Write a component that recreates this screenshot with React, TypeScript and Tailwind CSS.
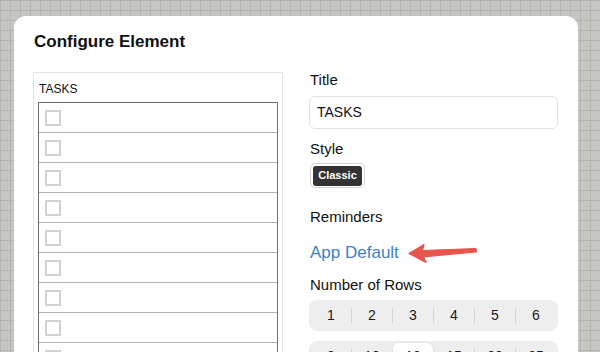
import React from "react";

const rows = Array.from({ length: 9 });

function Segmented({ items, selected }: { items: string[]; selected?: number }) {
  return (
    <div className="flex h-[31px] items-center rounded-[8px] bg-[#eeeeee] px-[2px]">
      {items.map((it, i) => {
        const showSep = i > 0 && selected !== i && selected !== i - 1;
        return (
          <React.Fragment key={i}>
            {i > 0 && (
              <div className={showSep ? "h-[15px] w-px bg-[#d3d3d3]" : "h-[15px] w-px bg-transparent"} />
            )}
            <div
              className={
                selected === i
                  ? "flex h-[27px] flex-1 items-center justify-center rounded-[6px] bg-white text-[14px] text-[#1a1a1a] shadow-[0_1px_3px_rgba(0,0,0,0.15)]"
                  : "flex h-[27px] flex-1 items-center justify-center text-[14px] text-[#1a1a1a]"
              }
            >
              {it}
            </div>
          </React.Fragment>
        );
      })}
    </div>
  );
}

export default function App() {
  return (
    <div
      className="relative h-[352px] w-[600px] overflow-hidden bg-[#c6c7c3] bg-[linear-gradient(to_right,#b4b5b1_1px,transparent_1px),linear-gradient(to_bottom,#b4b5b1_1px,transparent_1px)] bg-[size:10px_10px] pl-[14px] pt-[16px]"
      style={{ fontFamily: '"Liberation Sans", Arial, sans-serif' }}
    >
      <div className="h-[400px] w-[564px] rounded-t-[12px] bg-white pl-[19px] pr-[20px] pt-[14px]">
        <div className="ml-[1px] text-[17px] font-bold leading-[24px] text-[#111]">Configure Element</div>
        <div className="mt-[16px] flex">
          <div className="mt-[2px] h-[320px] w-[250px] border border-[#e4e4e4] px-[4px] pt-[8px]">
            <div className="pl-[1px] text-[12px] leading-[16px] text-[#111]">TASKS</div>
            <div className="mt-[5px] border-x border-t border-[#6e6e6e]">
              {rows.map((_, i) => (
                <div key={i} className="flex h-[30px] items-center border-b border-[#b3b3b3] pl-[6px]">
                  <div className="h-4 w-4 border-2 border-[#d2d2d2]" />
                </div>
              ))}
            </div>
          </div>
          <div className="ml-[26px] flex w-[249px] flex-col">
            <div className="ml-[1px] text-[15px] leading-[20px] text-[#111]">Title</div>
            <div className="mt-[6px] flex h-[33px] items-center rounded-[6px] border border-[#e2e2e2] px-[7px] text-[14px] text-[#111]">
              TASKS
            </div>
            <div className="ml-[1px] mt-[10px] text-[15px] leading-[20px] text-[#111]">Style</div>
            <div className="ml-[1px] mt-[4px] flex h-[25px] w-[55px] items-center justify-center rounded-[5px] border border-[#d4d4d4]">
              <div className="flex h-[20px] w-[49px] items-center justify-center rounded-[3px] bg-[#333333] text-[11px] font-bold text-white">
                Classic
              </div>
            </div>
            <div className="ml-[1px] mt-[19px] text-[15px] leading-[20px] text-[#111]">Reminders</div>
            <div className="ml-[1px] mt-[14px] text-[17px] leading-[24px] text-[#3d7fcc]">App Default</div>
            <div className="ml-[1px] mt-[10px] text-[15px] leading-[20px] text-[#111]">Number of Rows</div>
            <div className="mt-[5px]">
              <Segmented items={["1", "2", "3", "4", "5", "6"]} />
            </div>
            <div className="mt-[10px]">
              <Segmented items={["8", "10", "12", "15", "20", "25"]} selected={2} />
            </div>
          </div>
        </div>
      </div>
      <svg className="pointer-events-none absolute left-0 top-0" width="600" height="352" viewBox="0 0 600 352">
        <polygon
          points="409,253.5 424,244.5 422.5,250.5 476,248.5 476.5,251.8 423.5,256.8 426,262.5"
          fill="#e8554c"
          stroke="#e8554c"
          strokeWidth="1.2"
          strokeLinejoin="round"
        />
      </svg>
    </div>
  );
}
